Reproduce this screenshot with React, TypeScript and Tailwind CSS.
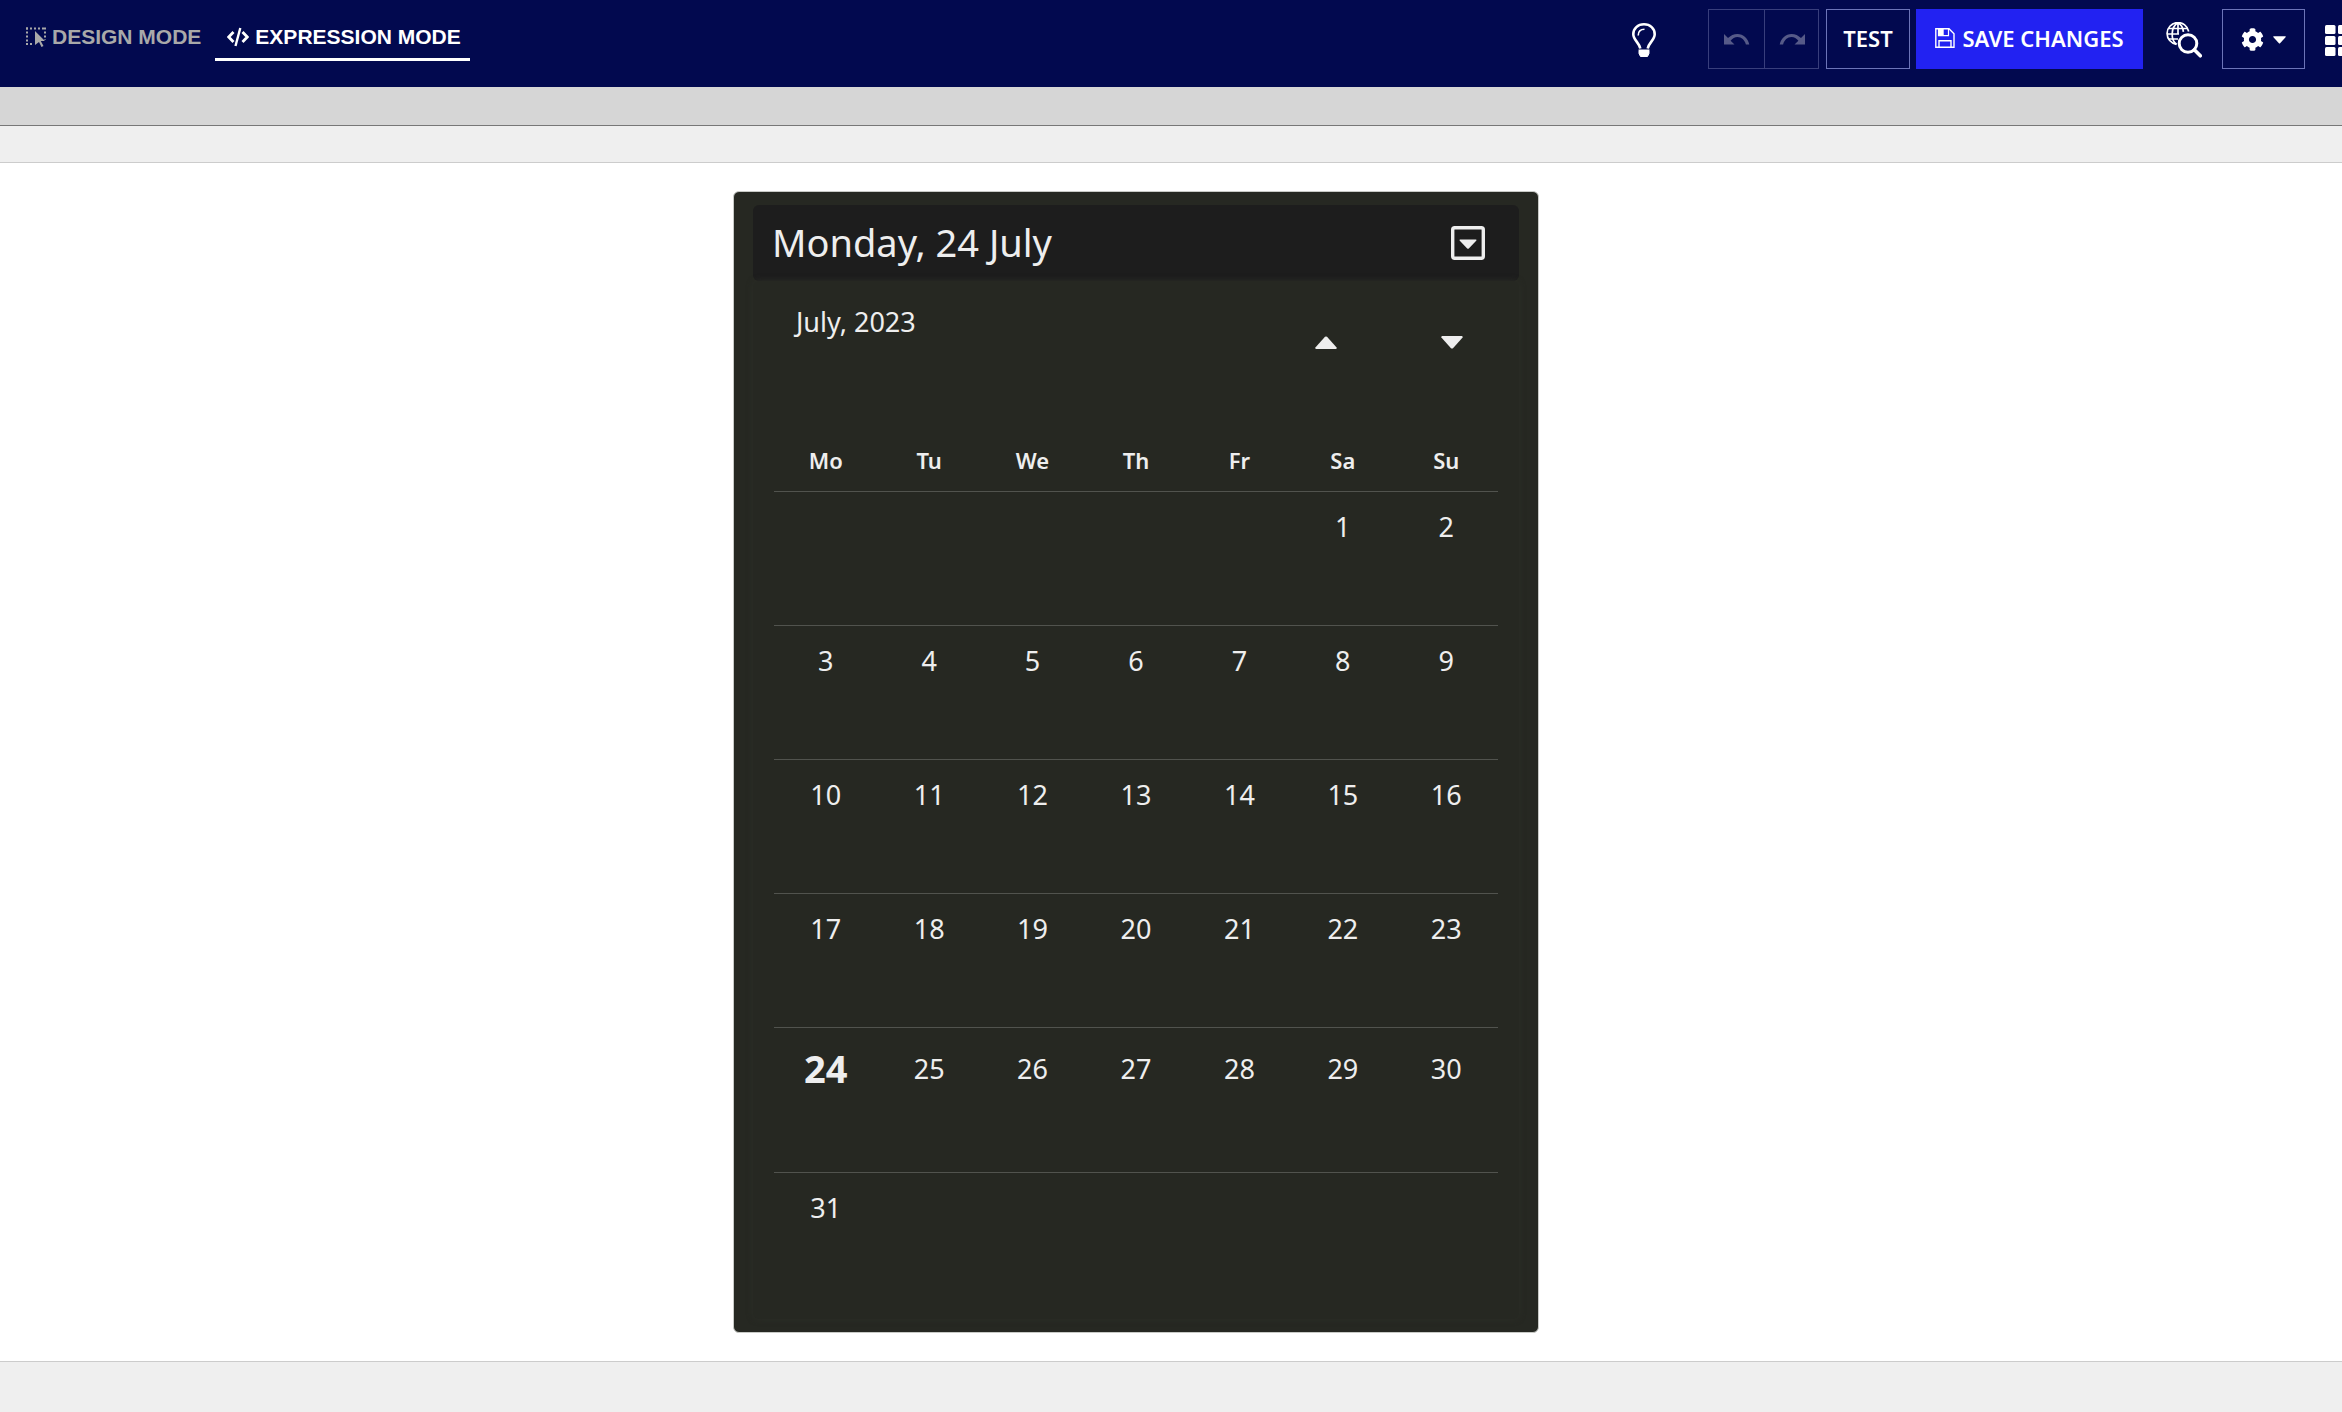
import React from "react";
import { FaCog } from "react-icons/fa";

const DAYS = ["Mo", "Tu", "We", "Th", "Fr", "Sa", "Su"];
const TODAY = 24;

const WEEKS: (number | null)[][] = [
  [null, null, null, null, null, 1, 2],
  [3, 4, 5, 6, 7, 8, 9],
  [10, 11, 12, 13, 14, 15, 16],
  [17, 18, 19, 20, 21, 22, 23],
  [24, 25, 26, 27, 28, 29, 30],
  [31, null, null, null, null, null, null],
];

function SelectIcon() {
  return (
    <svg width="20" height="20" viewBox="0 0 20 20" fill="none" aria-hidden="true">
      <g stroke="currentColor" strokeWidth="2" strokeDasharray="2 2">
        <path d="M0 1.500H20" />
        <path d="M1 0.500V18" />
        <path d="M19 0.500V13" />
        <path d="M0 17H8" />
      </g>
      <path d="M9 4l10 10h-4.200l2.700 5-2 1-2.500-5L9 18z" fill="currentColor" />
    </svg>
  );
}

function CodeIcon() {
  return (
    <svg width="22" height="20" viewBox="0 0 22 20" fill="none" stroke="currentColor" aria-hidden="true">
      <path d="M6.500 5L1.700 10l4.800 5M15.500 5l4.800 5-4.800 5" strokeWidth="2.800" />
      <path d="M13.300 1L8.500 19" strokeWidth="2.400" />
    </svg>
  );
}

function BulbIcon() {
  return (
    <svg width="24" height="34" viewBox="0 0 24 34" fill="none" stroke="currentColor" aria-hidden="true">
      <path d="M8.300 25.500C7.500 20 1.300 17 1.300 11.200C1.300 5.500 5.800 1.300 12 1.300S22.700 5.500 22.700 11.200C22.700 17 16.500 20 15.700 25.500" strokeWidth="2.600" />
      <path d="M6.200 12.500C6.200 8.500 8.500 6.200 12.500 6.200" strokeWidth="1.600" />
      <path d="M6.500 27h11M7 27.500h10v3l-1.500 3h-7L7 30.500z" fill="currentColor" strokeWidth="1" />
    </svg>
  );
}

function UndoIcon({ flip = false }: { flip?: boolean }) {
  return (
    <svg width="26" height="12" viewBox="0 0 26 12" fill="currentColor" aria-hidden="true" className={flip ? "-scale-x-100" : ""}>
      <path d="M0 1v10.500h10.500L6.600 7.700C8.400 5.700 10.800 4.100 13.500 4.100c4 0 7.300 3 8.400 7.400h3.400C24 5.200 19.300 1 13.500 1 9.800 1 6.500 2.600 4 5.100z" />
    </svg>
  );
}

function SaveIcon() {
  return (
    <svg width="20" height="20" viewBox="0 0 20 20" fill="none" stroke="currentColor" aria-hidden="true">
      <path d="M0.800 0.800H14L19 5.800V19.200H0.800z" strokeWidth="1.400" />
      <path d="M3.500 1v6.700h10V1" strokeWidth="1.200" />
      <path d="M3.500 1h5.200v6.700H3.500z" fill="currentColor" stroke="none" />
      <path d="M4 19v-6.300h12V19" strokeWidth="1.400" />
    </svg>
  );
}

function GlobeSearchIcon() {
  return (
    <svg width="36" height="36" viewBox="0 0 36 36" fill="none" stroke="currentColor" aria-hidden="true">
      <g strokeWidth="1.700">
        <path d="M10.500 22.300A10.900 10.900 0 1 1 22.700 9.500" />
        <path d="M10.500 22.300C4.500 18 4.500 5 12 0.800M12 0.800c3 1.700 5 5 5.400 9M12 0.800V12M2.500 6.500h19M1 12h12M2.500 17h9.500" />
      </g>
      <circle cx="22" cy="21.500" r="8.800" strokeWidth="3" />
      <path d="M28.300 27.800l6 6" strokeWidth="3.600" strokeLinecap="round" />
    </svg>
  );
}

function AppsIcon() {
  return (
    <svg width="36" height="31" viewBox="0 0 36 31" fill="currentColor" aria-hidden="true">
      {[0, 11, 22].map((y) =>
        [0, 13, 26].map((x) => <rect key={`${x}-${y}`} x={x} y={y} width="10.500" height="9" rx="1.500" />),
      )}
    </svg>
  );
}

function CaretIcon({ up = false, className }: { up?: boolean; className: string }) {
  return (
    <svg viewBox="0 0 22 13" fill="currentColor" aria-hidden="true" className={className}>
      <path d={up ? "M0.400 11.400L10 0.800Q11 0 12 0.800L21.600 11.400Q22 13 20.800 13H1.200Q0 13 0.400 11.400z" : "M0.400 1.600L10 12.200Q11 13 12 12.200L21.600 1.600Q22 0 20.800 0H1.200Q0 0 0.400 1.600z"} />
    </svg>
  );
}

function CaretSquareIcon() {
  return (
    <svg width="34" height="34" viewBox="0 0 34 34" fill="none" aria-hidden="true">
      <rect x="1.700" y="1.700" width="30.600" height="30.600" rx="2" stroke="currentColor" strokeWidth="3.400" />
      <path d="M8.800 13.500h16.400q.6.700 0 1.300L17.800 22.500q-.8.700-1.600 0L8.800 14.800q-.6-.6 0-1.300z" fill="currentColor" />
    </svg>
  );
}

function Toolbar() {
  return (
    <header className="flex h-[87px] items-start overflow-hidden bg-[#02094f] text-white">
      <nav className="flex pl-[14px] pt-[12px] font-['Liberation_Sans',Arial,sans-serif] text-[21px] font-bold">
        <button className="flex h-[49px] items-center gap-[6px] pl-[12px] pr-[14px] text-[#a9a9a9]">
          <SelectIcon />
          DESIGN MODE
        </button>
        <button className="flex h-[49px] items-center gap-[6px] border-b-[3px] border-white pl-[12px] pr-[9px] pt-[3px]">
          <CodeIcon />
          EXPRESSION MODE
        </button>
      </nav>
      <div className="-mr-[19px] ml-auto mt-[9px] flex h-[60px] shrink-0 items-center text-[22px] font-semibold">
        <button aria-label="Tips" className="mr-[52px] pt-[2px]">
          <BulbIcon />
        </button>
        <div className="mr-[7px] flex text-[#565a88]">
          <button aria-label="Undo" className="flex h-[60px] w-[57px] items-center justify-center border border-[#383e7c]">
            <UndoIcon />
          </button>
          <button aria-label="Redo" className="-ml-px flex h-[60px] w-[55px] items-center justify-center border border-[#383e7c]">
            <UndoIcon flip />
          </button>
        </div>
        <button className="mr-[6px] h-[60px] w-[84px] border border-[#6c74b8] pb-[2px]">TEST</button>
        <button className="mr-[23px] flex h-[60px] w-[227px] items-center justify-center gap-[7px] bg-[#2222f2] pb-[2px]">
          <SaveIcon />
          SAVE CHANGES
        </button>
        <button aria-label="Search site" className="mr-[20px] pt-[2px]">
          <GlobeSearchIcon />
        </button>
        <button aria-label="Settings" className="mr-[20px] flex h-[60px] w-[83px] items-center justify-center gap-[9px] border border-[#6c74b8]">
          <FaCog size={23} />
          <CaretIcon className="mt-[2px] h-[8px] w-[13px]" />
        </button>
        <button aria-label="Apps" className="pt-[2px]">
          <AppsIcon />
        </button>
      </div>
    </header>
  );
}

function Calendar() {
  return (
    <section className="w-[806px] rounded-[6px] border border-[#c8cac6] bg-[#262822] px-[19px] py-[13px] text-[#eeeeee]">
      <div className="flex h-[76px] items-center justify-between rounded-[6px] bg-[#1d1d1d] pl-[19px] pr-[34px]">
        <h1 className="pb-[2px] text-[38px] leading-[50px]">Monday, 24 July</h1>
        <button aria-label="Toggle calendar">
          <CaretSquareIcon />
        </button>
      </div>
      <div className="rounded-[6px] pb-[13px] shadow-[0_0_6px_#2c2e28]">
        <div className="flex h-[148px] items-start justify-between pl-[43px] pr-[4px]">
          <button className="h-[82px] text-[27px]">July, 2023</button>
          <div className="flex">
            <button aria-label="Previous month" className="flex h-[122px] w-[126px] items-center justify-center">
              <CaretIcon up className="h-[13px] w-[22px]" />
            </button>
            <button aria-label="Next month" className="flex h-[122px] w-[126px] items-center justify-center">
              <CaretIcon className="h-[13px] w-[22px]" />
            </button>
          </div>
        </div>
        <div className="px-[21px]">
          <table className="w-full table-fixed border-separate border-spacing-0">
            <thead>
              <tr className="h-[62px]">
                {DAYS.map((d) => (
                  <th key={d} scope="col" className="p-0 text-[22px] font-semibold">
                    {d}
                  </th>
                ))}
              </tr>
            </thead>
            <tbody>
              {WEEKS.map((week, i) => {
                const current = week.includes(TODAY);
                return (
                  <tr key={i} className={current ? "h-[145px]" : "h-[134px]"}>
                    {week.map((day, j) => (
                      <td key={j} className="border-t border-[#51534e] p-0 align-top">
                        {day !== null && (
                          <button
                            className={
                              day === TODAY
                                ? "h-[82px] w-full pb-[2px] text-[38px] font-bold"
                                : current
                                  ? "h-[82px] w-full text-[27px]"
                                  : "h-[70px] w-full text-[27px]"
                            }
                          >
                            {day}
                          </button>
                        )}
                      </td>
                    ))}
                  </tr>
                );
              })}
            </tbody>
          </table>
        </div>
      </div>
    </section>
  );
}

export default function App() {
  return (
    <div className="flex min-h-screen flex-col bg-[#efefef] font-['Noto_Sans','Open_Sans',sans-serif]">
      <Toolbar />
      <div className="h-[39px] border-b border-[#777777] bg-[#d6d6d6]" />
      <div className="h-[36px]" />
      <main className="flex justify-center border-y border-[#cccccc] bg-white py-[28px] pr-[70px]">
        <Calendar />
      </main>
    </div>
  );
}
